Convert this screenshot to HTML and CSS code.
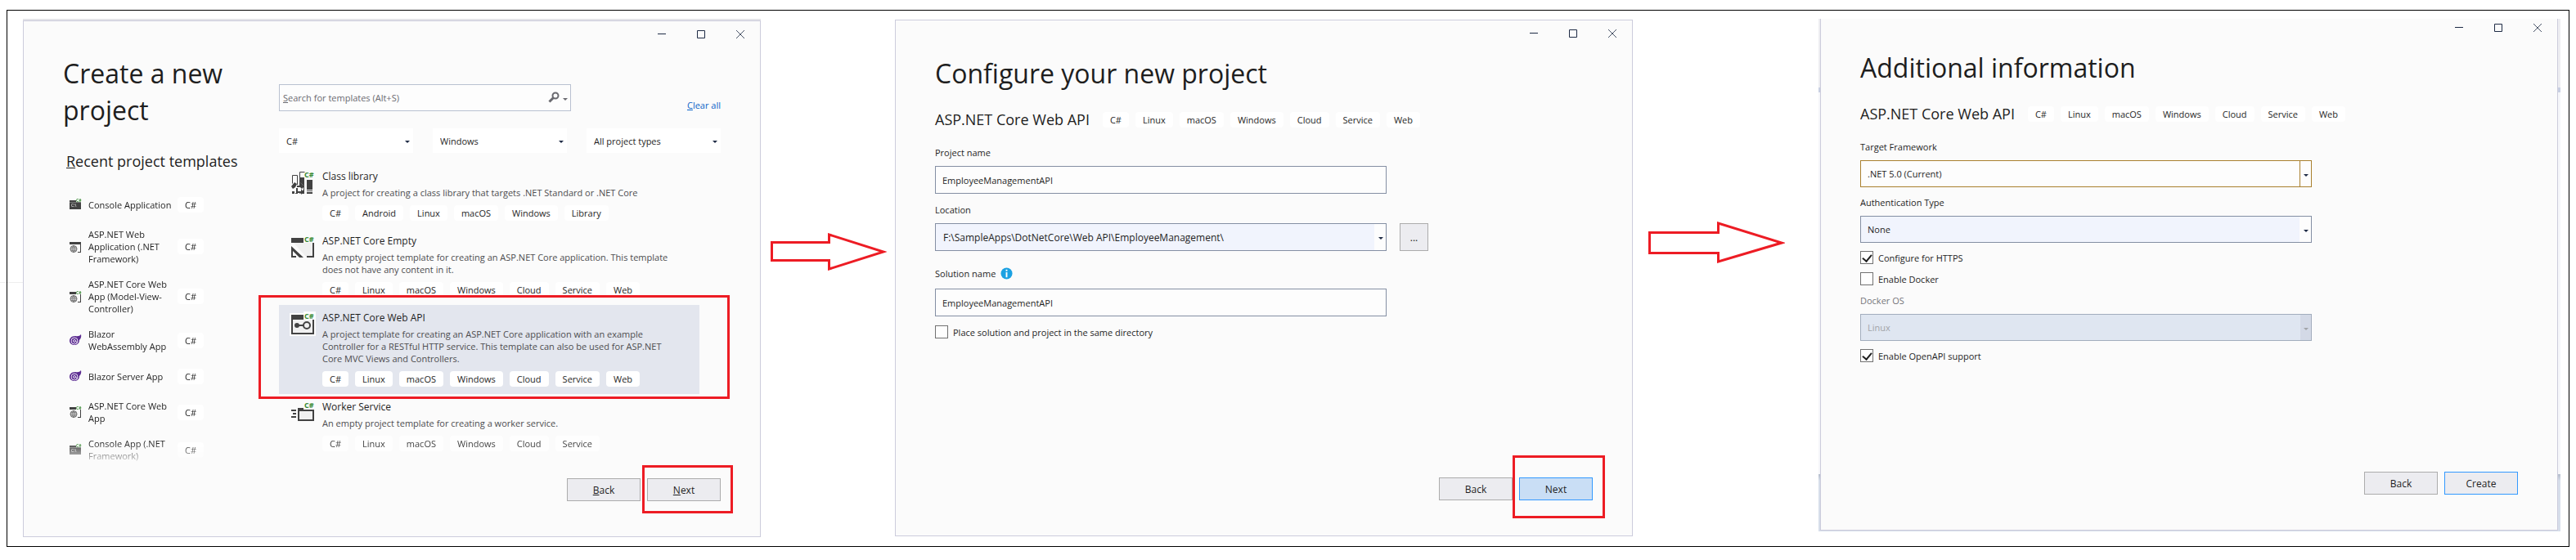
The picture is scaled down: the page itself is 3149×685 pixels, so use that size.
FILE: index.html
```html
<!DOCTYPE html>
<html lang="en">
<head>
    <meta charset="UTF-8">
    <meta name="viewport" content="width=device-width, initial-scale=1.0">
    <title>Create a new project</title>
    <link rel="stylesheet" href="styles.css">
</head>
<body>

    <!-- icon shapes shared by the template lists -->
    <svg class="sprite" aria-hidden="true">
        <symbol id="i-min" viewBox="0 0 12 12"><path d="M1 5.5h10" stroke="#1e2b45"/></symbol>
        <symbol id="i-max" viewBox="0 0 12 12"><path d="M1.5 1.5h9v9h-9z" fill="none" stroke="#1e2b45"/></symbol>
        <symbol id="i-close" viewBox="0 0 12 12"><path d="M1 1l10 10M11 1L1 11" stroke="#4a5568"/></symbol>
        <symbol id="i-search" viewBox="0 0 14 14">
            <circle cx="9" cy="5" r="3.5" fill="none" stroke="#6a6a70" stroke-width="2"/>
            <path d="M6.500 7.500L1.500 12.500" stroke="#6a6a70" stroke-width="3"/>
        </symbol>
        <symbol id="i-info" viewBox="0 0 16 16">
            <circle cx="8" cy="8" r="7.500" fill="#1ba1e2"/>
            <path d="M7 3h2v2H7zM7 6.500h2V13H7z" fill="#fff"/>
        </symbol>

        <symbol id="i-library" viewBox="0 0 32 32">
            <path d="M3.500 18V6.500h6V18M12.500 12V2.500h6" fill="none" stroke="#424242"/>
            <path d="M12 9h6v20h-6zM21 12h7v12h-7zM21 25h7v1h-7zM21 27h7v2h-7zM3 26h3v3H3zM7 28h3v1H7z" fill="#424242"/>
            <path d="M1 19l5-5 3 3-2 2h9l-3-4 4 4v5l-4 5-3-5H7v-4l-3 2z" fill="#fbfbfb"/>
            <path d="M2 20l4-5 3 2-2 4-3 2zM9 19h5v2H9zM14 16l4 4-3 3-2-2zM8 22h2v4h4v-3l3 4-3 3v-2H8z" fill="#424242"/>
            <text x="18" y="9" class="cs-mark">C#</text>
        </symbol>
        <symbol id="i-empty" viewBox="0 0 32 32">
            <path d="M5 10h23v17H20z" fill="#f0f0f0"/>
            <path d="M2 4h15v6H2zM28 10h2v18h-9v-2h7zM2 14l15 14h-5L4 20v6h4v2H2z" fill="#424242"/>
            <text x="18" y="9" class="cs-mark">C#</text>
        </symbol>
        <symbol id="i-webapi" viewBox="0 0 32 32">
            <path d="M0 2h17V0h15v30H0z" fill="#fcfcfc"/>
            <path d="M3 5h14l3 5h9v17H3z" fill="#f0f0f0"/>
            <path d="M2 4h15v6h11v0h2v18H2zM4 10v16h24V10z" fill="#424242" fill-rule="evenodd"/>
            <circle cx="9" cy="17" r="3" fill="#424242"/>
            <path d="M10 17h7" stroke="#424242" stroke-width="2"/>
            <circle cx="21" cy="17" r="4" fill="#f0f0f0" stroke="#424242" stroke-width="2"/>
            <text x="18" y="9" class="cs-mark">C#</text>
        </symbol>
        <symbol id="i-worker" viewBox="0 0 32 32">
            <path d="M11 12h18v11H11z" fill="#f0f0f0"/>
            <path d="M10 9h7v2h13v14H10zM12 13v10h16V13zM2 11h6v2H2zM4 15h4v2H4zM2 19h6v2H2z" fill="#424242" fill-rule="evenodd"/>
            <text x="18" y="9" class="cs-mark">C#</text>
        </symbol>

        <symbol id="i-console" viewBox="0 0 16 16">
            <path d="M1 3h8v2h6v9H1z" fill="#424242"/>
            <path d="M1 5.500h14" stroke="#777"/>
            <text x="3" y="11" class="prompt">C:\</text>
            <text x="9" y="5" class="cs-small">C#</text>
        </symbol>
        <symbol id="i-web" viewBox="0 0 16 16">
            <path d="M1 2h8v3H1zM14 5h1v10h-4v-1h3z" fill="#424242"/>
            <circle cx="6" cy="10.500" r="4" fill="#fbfbfb" stroke="#666"/>
            <path d="M2 10.500h8M3 8.500h6M3 12.500h6M6 6.500v8M6 6.500q-4 4 0 8M6 6.500q4 4 0 8" fill="none" stroke="#666" stroke-width=".7"/>
            <text x="9" y="5" class="cs-small">C#</text>
        </symbol>
        <symbol id="i-webfx" viewBox="0 0 16 16">
            <path d="M1 2h14v3H1zM14 5h1v10h-4v-1h3z" fill="#424242"/>
            <circle cx="6" cy="10.500" r="4" fill="#fbfbfb" stroke="#666"/>
            <path d="M2 10.500h8M3 8.500h6M3 12.500h6M6 6.500v8M6 6.500q-4 4 0 8M6 6.500q4 4 0 8" fill="none" stroke="#666" stroke-width=".7"/>
        </symbol>
        <symbol id="i-blazor" viewBox="0 0 16 16">
            <path d="M15 1q-2 3-7 2C3 3 1 6 1 9s3 5 6 5 6-2 6-6q3-3 2-7z" fill="#5c2d91"/>
            <circle cx="7" cy="9" r="4" fill="none" stroke="#e8dff2"/>
            <circle cx="7" cy="9" r="1.500" fill="none" stroke="#e8dff2"/>
            <path d="M8.500 9q1 3 2.500 1" fill="none" stroke="#e8dff2"/>
        </symbol>
    </svg>

    <main class="frame">

        <!-- Step 1: pick a template -->
        <section class="window window-create">
            <div class="titlebar">
                <button type="button" aria-label="Minimize"><svg><use href="#i-min"/></svg></button>
                <button type="button" aria-label="Maximize"><svg><use href="#i-max"/></svg></button>
                <button type="button" aria-label="Close"><svg><use href="#i-close"/></svg></button>
            </div>
            <div class="columns">
                <div class="recent">
                    <h1>Create a new<br>project</h1>
                    <h2><u>R</u>ecent project templates</h2>
                    <ul class="recent-list">
                        <li><svg><use href="#i-console"/></svg><span class="name">Console Application</span><span class="tag">C#</span></li>
                        <li><svg><use href="#i-webfx"/></svg><span class="name">ASP.NET Web<br>Application (.NET<br>Framework)</span><span class="tag">C#</span></li>
                        <li><svg><use href="#i-web"/></svg><span class="name">ASP.NET Core Web<br>App (Model-View-<br>Controller)</span><span class="tag">C#</span></li>
                        <li><svg><use href="#i-blazor"/></svg><span class="name">Blazor<br>WebAssembly App</span><span class="tag">C#</span></li>
                        <li><svg><use href="#i-blazor"/></svg><span class="name">Blazor Server App</span><span class="tag">C#</span></li>
                        <li><svg><use href="#i-web"/></svg><span class="name">ASP.NET Core Web<br>App</span><span class="tag">C#</span></li>
                        <li><svg><use href="#i-console"/></svg><span class="name">Console App (.NET<br>Framework)</span><span class="tag">C#</span></li>
                    </ul>
                </div>

                <div class="browse">
                    <div class="search-row">
                        <div class="search">
                            <input type="text" id="search">
                            <label for="search"><u>S</u>earch for templates (Alt+S)</label>
                            <svg><use href="#i-search"/></svg>
                            <span class="caret"></span>
                        </div>
                        <a href="#" class="clear"><u>C</u>lear all</a>
                    </div>
                    <div class="filters">
                        <div class="drop"><select aria-label="Language"><option>C#</option></select><span class="caret"></span></div>
                        <div class="drop"><select aria-label="Platform"><option>Windows</option></select><span class="caret"></span></div>
                        <div class="drop"><select aria-label="Project type"><option>All project types</option></select><span class="caret"></span></div>
                    </div>
                    <ul class="templates">
                        <li>
                            <svg><use href="#i-library"/></svg>
                            <div>
                                <h3>Class library</h3>
                                <p>A project for creating a class library that targets .NET Standard or .NET Core</p>
                                <div class="tags"><span class="tag">C#</span><span class="tag">Android</span><span class="tag">Linux</span><span class="tag">macOS</span><span class="tag">Windows</span><span class="tag">Library</span></div>
                            </div>
                        </li>
                        <li>
                            <svg><use href="#i-empty"/></svg>
                            <div>
                                <h3>ASP.NET Core Empty</h3>
                                <p>An empty project template for creating an ASP.NET Core application. This template<br>does not have any content in it.</p>
                                <div class="tags"><span class="tag">C#</span><span class="tag">Linux</span><span class="tag">macOS</span><span class="tag">Windows</span><span class="tag">Cloud</span><span class="tag">Service</span><span class="tag">Web</span></div>
                            </div>
                        </li>
                        <li class="selected">
                            <svg><use href="#i-webapi"/></svg>
                            <div>
                                <h3>ASP.NET Core Web API</h3>
                                <p>A project template for creating an ASP.NET Core application with an example<br>Controller for a RESTful HTTP service. This template can also be used for ASP.NET<br>Core MVC Views and Controllers.</p>
                                <div class="tags"><span class="tag">C#</span><span class="tag">Linux</span><span class="tag">macOS</span><span class="tag">Windows</span><span class="tag">Cloud</span><span class="tag">Service</span><span class="tag">Web</span></div>
                            </div>
                            <span class="mark mark-template"></span>
                        </li>
                        <li class="last">
                            <svg><use href="#i-worker"/></svg>
                            <div>
                                <h3>Worker Service</h3>
                                <p>An empty project template for creating a worker service.</p>
                                <div class="tags"><span class="tag">C#</span><span class="tag">Linux</span><span class="tag">macOS</span><span class="tag">Windows</span><span class="tag">Cloud</span><span class="tag">Service</span></div>
                            </div>
                        </li>
                    </ul>
                </div>
            </div>
            <div class="actions">
                <button type="button" class="btn"><u>B</u>ack</button>
                <div class="marked">
                    <button type="button" class="btn"><u>N</u>ext</button>
                    <span class="mark mark-next"></span>
                </div>
            </div>
        </section>

        <div class="step step-one">
            <svg viewBox="0 0 142 46" width="142" height="46"><path d="M1.500 11.500H71.500V2L138 23 71.500 44V33.500H1.500z"/></svg>
        </div>

        <!-- Step 2: name and location -->
        <section class="window window-configure">
            <div class="titlebar">
                <button type="button" aria-label="Minimize"><svg><use href="#i-min"/></svg></button>
                <button type="button" aria-label="Maximize"><svg><use href="#i-max"/></svg></button>
                <button type="button" aria-label="Close"><svg><use href="#i-close"/></svg></button>
            </div>
            <form class="form">
                <h1>Configure your new project</h1>
                <div class="subject">
                    <h2>ASP.NET Core Web API</h2>
                    <div class="tags"><span class="tag">C#</span><span class="tag">Linux</span><span class="tag">macOS</span><span class="tag">Windows</span><span class="tag">Cloud</span><span class="tag">Service</span><span class="tag">Web</span></div>
                </div>
                <div class="field">
                    <label for="project">Project name</label>
                    <input type="text" id="project" value="EmployeeManagementAPI">
                </div>
                <div class="field">
                    <label for="location">Location</label>
                    <div class="location">
                        <div class="combo"><select id="location"><option>F:\SampleApps\DotNetCore\Web API\EmployeeManagement\</option></select><span class="caret"></span></div>
                        <button type="button" class="browse-btn">...</button>
                    </div>
                </div>
                <div class="field field-solution">
                    <label for="solution">Solution name <svg><use href="#i-info"/></svg></label>
                    <input type="text" id="solution" value="EmployeeManagementAPI">
                </div>
                <label class="check"><input type="checkbox"> Place solution and project in the same directory</label>
            </form>
            <div class="actions">
                <button type="button" class="btn">Back</button>
                <div class="marked">
                    <button type="button" class="btn btn-hover">Next</button>
                    <span class="mark mark-configure"></span>
                </div>
            </div>
        </section>

        <div class="step step-two">
            <svg viewBox="0 0 167 52" width="167" height="52"><path d="M1.500 13.500H85.500V2L163 26 85.500 49V38.500H1.500z"/></svg>
        </div>

        <!-- Step 3: framework options -->
        <div class="backdrop">
            <section class="window window-info">
                <div class="titlebar">
                    <button type="button" aria-label="Minimize"><svg><use href="#i-min"/></svg></button>
                    <button type="button" aria-label="Maximize"><svg><use href="#i-max"/></svg></button>
                    <button type="button" aria-label="Close"><svg><use href="#i-close"/></svg></button>
                </div>
                <form class="form">
                    <h1>Additional information</h1>
                    <div class="subject">
                        <h2>ASP.NET Core Web API</h2>
                        <div class="tags"><span class="tag">C#</span><span class="tag">Linux</span><span class="tag">macOS</span><span class="tag">Windows</span><span class="tag">Cloud</span><span class="tag">Service</span><span class="tag">Web</span></div>
                    </div>
                    <div class="field">
                        <label for="framework">Target Framework</label>
                        <div class="combo combo-focus"><select id="framework"><option>.NET 5.0 (Current)</option></select><span class="caret"></span></div>
                    </div>
                    <div class="field">
                        <label for="auth">Authentication Type</label>
                        <div class="combo"><select id="auth"><option>None</option></select><span class="caret"></span></div>
                    </div>
                    <label class="check"><input type="checkbox" checked> Configure for HTTPS</label>
                    <label class="check"><input type="checkbox"> Enable Docker</label>
                    <div class="field">
                        <label for="docker" class="off">Docker OS</label>
                        <div class="combo combo-off"><select id="docker" disabled><option>Linux</option></select><span class="caret"></span></div>
                    </div>
                    <label class="check"><input type="checkbox" checked> Enable OpenAPI support</label>
                </form>
                <div class="actions">
                    <button type="button" class="btn">Back</button>
                    <button type="button" class="btn btn-default">Create</button>
                </div>
            </section>
        </div>

    </main>

</body>
</html>
```
FILE: styles.css
```css
* {
    box-sizing: border-box;
}

body {
    margin: 0;
    padding: 12px 8px 16px;
    background: linear-gradient(#eeeeee, #eeeeee) no-repeat 0 345px / 28px 1px #fff;
    font-family: "Open Sans", "Noto Sans", sans-serif;
    font-size: 11px;
    line-height: 15px;
    color: #1e1e1e;
}

h1, h2, h3, p, ul {
    margin: 0;
    padding: 0;
    font-weight: normal;
}

ul {
    list-style: none;
}

input, select, button {
    font: inherit;
    color: inherit;
    margin: 0;
}

.sprite {
    display: none;
}

.cs-mark {
    font-size: 9px;
    font-weight: bold;
    fill: #388a34;
}

.cs-small {
    font-size: 5px;
    font-weight: bold;
    fill: #388a34;
}

.prompt {
    font-size: 5px;
    fill: #fff;
}

.frame {
    display: flex;
    min-height: calc(100vh - 28px);
    padding: 10px 10px 11px 19px;
    border: 1px solid #000;
}

/* windows */
.window {
    display: flex;
    flex: 1;
    flex-direction: column;
    background: #fbfbfb;
    border: 1px solid #ccccdc;
}

.window-create {
    margin-top: 2px;
    box-shadow: 0 -2px 0 #e4e4e8;
}

.window-configure {
    margin: 1px 0;
}

.window-info {
    border-top: none;
}

.backdrop {
    display: flex;
    flex: 1 0 7px;
    margin-bottom: 7px;
    padding: 0 3px 1px 2px;
    background: linear-gradient(#ededf1 84px, #c8cfe2 84px, #c8cfe2 90px, #f5f6fa 90px, #f5f6fa 557px, #b4bccb 557px, #d6deea 565px);
}

.titlebar {
    display: flex;
    justify-content: flex-end;
    height: 32px;
    margin-bottom: 9px;
}

.window-info .titlebar {
    height: 22px;
    margin-bottom: 14px;
}

.titlebar button {
    display: flex;
    align-items: center;
    justify-content: center;
    width: 48px;
    padding: 0;
    border: none;
    background: none;
}

.titlebar svg {
    width: 12px;
    height: 12px;
}

h1 {
    font-size: 32px;
    line-height: 45px;
}

h2 {
    font-size: 18px;
    line-height: 24px;
    white-space: nowrap;
}

.tags {
    display: flex;
    gap: 8px;
}

.tag {
    height: 19px;
    padding: 0 9px;
    border-radius: 4px;
    background: #fff;
    line-height: 19px;
}

.caret {
    position: absolute;
    top: 50%;
    right: 4px;
    border: 3px solid transparent;
    border-top-color: #1e2b45;
    border-bottom: none;
    pointer-events: none;
}

/* step 1 */
.columns {
    display: flex;
    padding: 0 48px;
}

.recent {
    width: 264px;
}

.recent h2 {
    margin: 28px 0 20px 4px;
}

.recent-list {
    height: 346px;
    overflow: hidden;
    mask-image: linear-gradient(#000 312px, transparent 342px);
}

.recent-list li {
    display: flex;
    align-items: center;
    min-height: 42px;
    padding: 8px 0 8px 7px;
}

.recent-list svg {
    flex: none;
    width: 16px;
    height: 16px;
    margin-right: 8px;
}

.recent-list .name {
    width: 109px;
    white-space: nowrap;
}

.browse {
    width: 540px;
    padding-top: 36px;
}

.search-row {
    display: flex;
    justify-content: space-between;
    align-items: flex-end;
}

.search {
    position: relative;
    width: 357px;
}

.search input {
    display: block;
    width: 100%;
    height: 33px;
    padding: 0 40px 0 5px;
    border: 1px solid #b9c1d1;
    background: #fdfdfd;
}

.search label {
    position: absolute;
    top: 9px;
    left: 5px;
    color: #6a6a70;
}

.search svg {
    position: absolute;
    top: 9px;
    right: 14px;
    width: 14px;
    height: 14px;
}

.search .caret {
    border-top-color: #6a6a70;
}

.clear {
    color: #0a64c8;
    text-decoration: none;
}

.filters {
    display: flex;
    justify-content: space-between;
    margin: 21px 0 13px;
}

.drop {
    position: relative;
    width: 164px;
}

.drop select {
    display: block;
    width: 100%;
    height: 30px;
    padding: 0 9px;
    border: none;
    background: #fff;
    appearance: none;
}

.templates {
    width: 514px;
}

.templates li {
    position: relative;
    display: flex;
    gap: 8px;
    padding: 8px 0 9px 13px;
}

.templates svg {
    flex: none;
    width: 32px;
    height: 32px;
}

.templates h3 {
    font-size: 12px;
    line-height: 16px;
}

.templates p {
    margin: 4px 0 8px;
    color: #4d4d4f;
    white-space: nowrap;
}

.templates .selected {
    background: #e3e6ee;
}

.templates .last .tags {
    opacity: 0.85;
}

/* red highlights */
.mark {
    position: absolute;
    border: 3px solid #ed1c24;
    pointer-events: none;
}

.mark-template {
    top: -12px;
    right: -37px;
    bottom: -6px;
    left: -25px;
}

.mark-next {
    top: -16px;
    right: -15px;
    bottom: -15px;
    left: -6px;
}

.mark-configure {
    top: -27px;
    right: -15px;
    bottom: -22px;
    left: -8px;
}

.marked {
    position: relative;
}

.actions {
    display: flex;
    justify-content: flex-end;
    gap: 8px;
    margin-top: auto;
    padding: 0 48px 43px;
}

.btn {
    display: block;
    width: 90px;
    height: 28px;
    padding: 0;
    border: 1px solid #acacac;
    background: #ececf0;
    font-size: 12px;
}

.btn-hover {
    border-color: #3399ff;
    background: #c9def5;
}

.btn-default {
    border-color: #3399ff;
}

/* arrows between the steps */
.step {
    flex: none;
}

.step svg {
    display: block;
    fill: none;
    stroke: #ed1c24;
    stroke-width: 3;
}

.step-one {
    width: 164px;
    padding: 262px 0 0 12px;
}

.step-two {
    width: 227px;
    padding: 248px 0 0 19px;
}

/* steps 2 and 3 */
.form {
    padding: 1px 48px 0;
}

.subject {
    display: flex;
    align-items: center;
    gap: 16px;
    margin: 22px 0 20px;
}

.field {
    margin-bottom: 11px;
}

.window-info .field {
    margin-bottom: 10px;
}

.field label {
    display: flex;
    align-items: center;
    gap: 6px;
    height: 16px;
    margin-bottom: 9px;
}

.field label.off {
    color: #76767a;
}

.field-solution {
    padding-top: 6px;
}

.field-solution label {
    height: 20px;
}

.field-solution svg {
    width: 15px;
    height: 15px;
}

.field > input {
    display: block;
    width: 552px;
    height: 34px;
    padding: 0 8px;
    border: 1px solid #848fa3;
    background: #fdfdfd;
}

.location {
    display: flex;
    gap: 16px;
    font-size: 12px;
}

.combo {
    position: relative;
    width: 552px;
}

.combo select {
    display: block;
    width: 100%;
    height: 34px;
    padding: 0 20px 0 9px;
    border: 1px solid #848fa3;
    border-radius: 0;
    background: linear-gradient(to left, #fdfdfd 14px, #f1f4fd 14px);
    appearance: none;
    opacity: 1;
}

.window-info .combo select {
    height: 33px;
    padding-left: 8px;
}

.window-info .combo-focus select {
    border-color: #a9802f;
    background: linear-gradient(to left, #fdfdfd 13px, #a9802f 13px, #a9802f 14px, #fdfdfd 14px);
}

.window-info .combo-off select {
    border-color: #a2adbd;
    background: linear-gradient(to left, #d3d9e6 13px, #dfe6f1 13px);
    color: #a2a4a8;
}

.combo-off .caret {
    border-top-color: #a2a4a8;
}

.browse-btn {
    width: 35px;
    padding: 0;
    border: 1px solid #acacac;
    background: #ececf0;
}

.check {
    display: flex;
    align-items: center;
    gap: 6px;
    height: 16px;
    margin-bottom: 10px;
}

.check input {
    display: grid;
    place-items: center;
    width: 16px;
    height: 16px;
    border: 1px solid #717171;
    background: #fefefe;
    appearance: none;
}

.check input:checked::before {
    content: "";
    width: 5px;
    height: 9px;
    margin-bottom: 2px;
    border: solid #1e1e1e;
    border-width: 0 2px 2px 0;
    transform: rotate(40deg);
}
```
